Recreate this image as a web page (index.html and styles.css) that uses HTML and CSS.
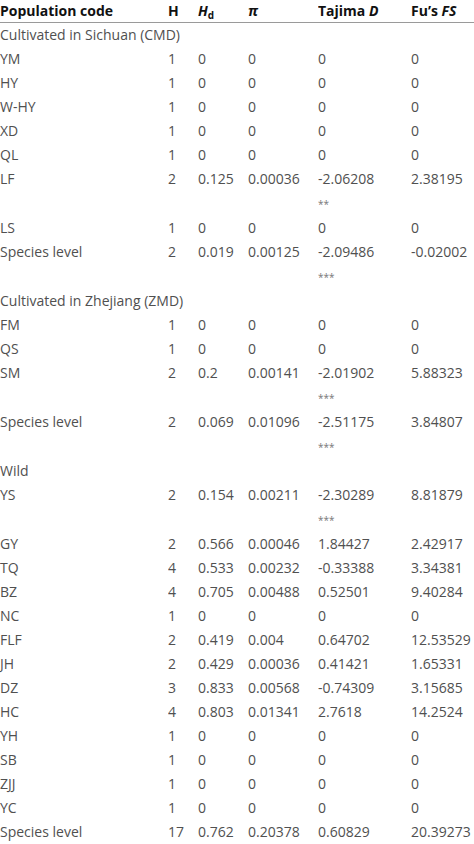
FILE: index.html
```html
<!DOCTYPE html>
<html>
<head>
<meta charset="utf-8">
<link rel="stylesheet" href="styles.css">
</head>
<body>
<table class="tbl">
<colgroup><col class="c1"><col class="c2"><col class="c3"><col class="c4"><col class="c5"><col class="c6"></colgroup>
<thead>
<tr><th>Population code</th><th>H</th><th><i>H</i><sub>d</sub></th><th><i>π</i></th><th>Tajima <i>D</i></th><th>Fu’s <i>FS</i></th></tr>
</thead>
<tbody>
<tr><td colspan="6">Cultivated in Sichuan (CMD)</td></tr>
<tr><td>YM</td><td>1</td><td>0</td><td>0</td><td>0</td><td>0</td></tr>
<tr><td>HY</td><td>1</td><td>0</td><td>0</td><td>0</td><td>0</td></tr>
<tr><td>W-HY</td><td>1</td><td>0</td><td>0</td><td>0</td><td>0</td></tr>
<tr><td>XD</td><td>1</td><td>0</td><td>0</td><td>0</td><td>0</td></tr>
<tr><td>QL</td><td>1</td><td>0</td><td>0</td><td>0</td><td>0</td></tr>
<tr><td>LF</td><td>2</td><td>0.125</td><td>0.00036</td><td>-2.06208<br><span class="st">**</span></td><td>2.38195</td></tr>
<tr><td>LS</td><td>1</td><td>0</td><td>0</td><td>0</td><td>0</td></tr>
<tr><td>Species level</td><td>2</td><td>0.019</td><td>0.00125</td><td>-2.09486<br><span class="st">***</span></td><td>-0.02002</td></tr>
<tr><td colspan="6">Cultivated in Zhejiang (ZMD)</td></tr>
<tr><td>FM</td><td>1</td><td>0</td><td>0</td><td>0</td><td>0</td></tr>
<tr><td>QS</td><td>1</td><td>0</td><td>0</td><td>0</td><td>0</td></tr>
<tr><td>SM</td><td>2</td><td>0.2</td><td>0.00141</td><td>-2.01902<br><span class="st">***</span></td><td>5.88323</td></tr>
<tr><td>Species level</td><td>2</td><td>0.069</td><td>0.01096</td><td>-2.51175<br><span class="st">***</span></td><td>3.84807</td></tr>
<tr><td colspan="6">Wild</td></tr>
<tr><td>YS</td><td>2</td><td>0.154</td><td>0.00211</td><td>-2.30289<br><span class="st">***</span></td><td>8.81879</td></tr>
<tr><td>GY</td><td>2</td><td>0.566</td><td>0.00046</td><td>1.84427</td><td>2.42917</td></tr>
<tr><td>TQ</td><td>4</td><td>0.533</td><td>0.00232</td><td>-0.33388</td><td>3.34381</td></tr>
<tr><td>BZ</td><td>4</td><td>0.705</td><td>0.00488</td><td>0.52501</td><td>9.40284</td></tr>
<tr><td>NC</td><td>1</td><td>0</td><td>0</td><td>0</td><td>0</td></tr>
<tr><td>FLF</td><td>2</td><td>0.419</td><td>0.004</td><td>0.64702</td><td>12.53529</td></tr>
<tr><td>JH</td><td>2</td><td>0.429</td><td>0.00036</td><td>0.41421</td><td>1.65331</td></tr>
<tr><td>DZ</td><td>3</td><td>0.833</td><td>0.00568</td><td>-0.74309</td><td>3.15685</td></tr>
<tr><td>HC</td><td>4</td><td>0.803</td><td>0.01341</td><td>2.7618</td><td>14.2524</td></tr>
<tr><td>YH</td><td>1</td><td>0</td><td>0</td><td>0</td><td>0</td></tr>
<tr><td>SB</td><td>1</td><td>0</td><td>0</td><td>0</td><td>0</td></tr>
<tr><td>ZJJ</td><td>1</td><td>0</td><td>0</td><td>0</td><td>0</td></tr>
<tr><td>YC</td><td>1</td><td>0</td><td>0</td><td>0</td><td>0</td></tr>
<tr><td>Species level</td><td>17</td><td>0.762</td><td>0.20378</td><td>0.60829</td><td>20.39273</td></tr>
</tbody>
</table>
</body>
</html>
```
FILE: styles.css
```css
html, body {
  margin: 0;
  padding: 0;
  background: #ffffff;
  overflow: hidden;
}
body {
  width: 474px;
  height: 844px;
  font-family: "Open Sans", "Noto Sans", sans-serif;
  font-size: 14px;
  color: #505050;
}
.tbl {
  border-collapse: collapse;
  table-layout: fixed;
  width: 474px;
}
.c1 { width: 168px; }
.c2 { width: 30px; }
.c3 { width: 50px; }
.c4 { width: 70px; }
.c5 { width: 93px; }
.c6 { width: 63px; }
.tbl th, .tbl td {
  padding: 0;
  text-align: left;
  white-space: nowrap;
  vertical-align: top;
  line-height: 24px;
  overflow: hidden;
}
.tbl td[colspan] {
  overflow: visible;
}
.tbl th {
  font-weight: 700;
  color: #111111;
  height: 22px;
  line-height: 22px;
  border-bottom: 1px solid #9a9a9a;
}
.tbl th sub {
  font-size: 10px;
  vertical-align: -3px;
  line-height: 0;
}
.st {
  font-size: 10px;
  color: #777777;
}
```
